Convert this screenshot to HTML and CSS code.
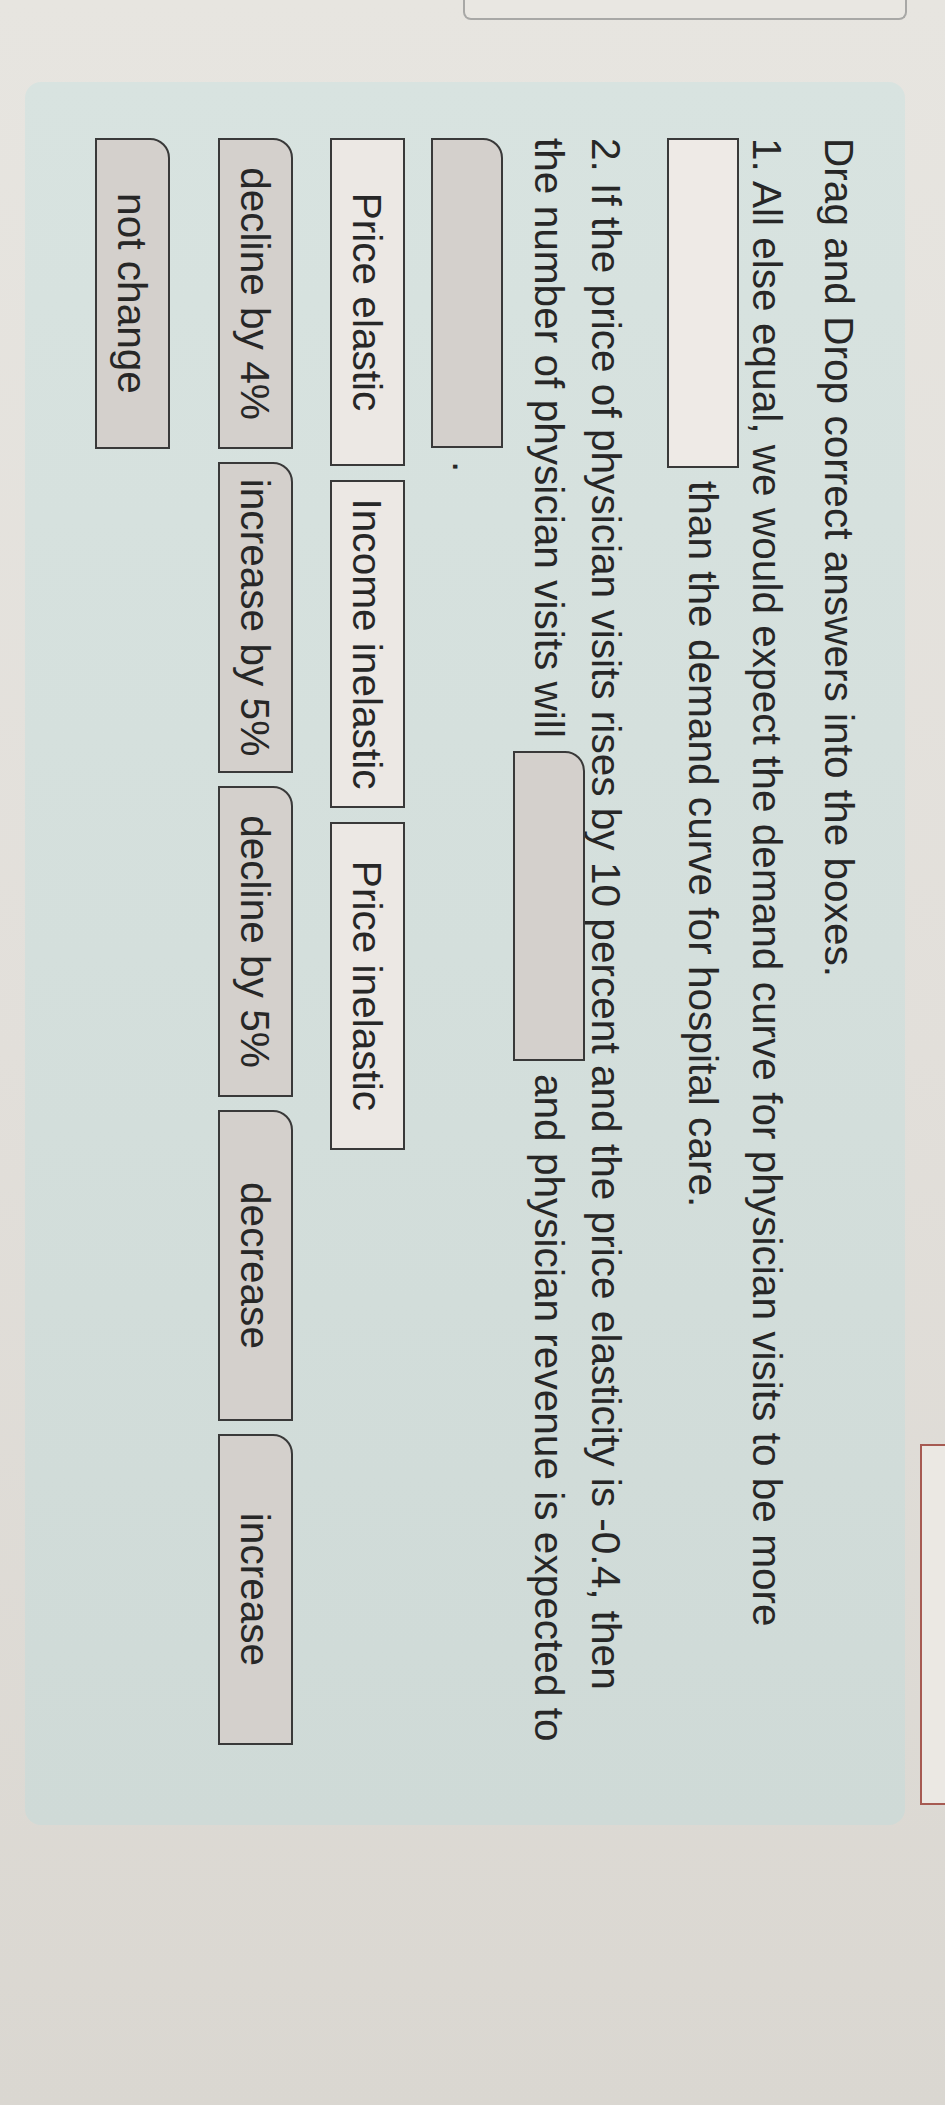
FILE: index.html
```html
<!DOCTYPE html>
<html lang="en">
<head>
<meta charset="utf-8">
<title>Drag and Drop</title>
<link rel="stylesheet" href="styles.css">
</head>
<body>
<div class="screen">
  <div class="page">
    <div class="top-strip"><div class="feedback-box"></div></div>
    <div class="main">
      <div class="side-box"></div>
      <section class="panel">
        <p class="line title">Drag and Drop correct answers into the boxes.</p>
        <p class="line q1a">1. All else equal, we would expect the demand curve for physician visits to be more</p>
        <div class="row q1b">
          <span class="drop drop-white"></span>
          <span>than the demand curve for hospital care.</span>
        </div>
        <p class="line q2a">2. If the price of physician visits rises by 10 percent and the price elasticity is -0.4, then</p>
        <div class="row q2b">
          <span>the number of physician visits will</span>
          <span class="drop drop-grey"></span>
          <span>and physician revenue is expected to</span>
        </div>
        <div class="row q2c">
          <span class="drop drop-grey"></span>
          <span>.</span>
        </div>
        <div class="chips chips-white">
          <div class="chip chip-white">Price elastic</div>
          <div class="chip chip-white">Income inelastic</div>
          <div class="chip chip-white">Price inelastic</div>
        </div>
        <div class="chips chips-grey">
          <div class="chip chip-grey">decline by 4%</div>
          <div class="chip chip-grey">increase by 5%</div>
          <div class="chip chip-grey">decline by 5%</div>
          <div class="chip chip-grey">decrease</div>
          <div class="chip chip-grey">increase</div>
          <div class="chip chip-grey">not change</div>
        </div>
      </section>
    </div>
  </div>
</div>
</body>
</html>
```

FILE: styles.css
```css
html, body {
  margin: 0;
  padding: 0;
  background: #e1dfd9;
}

.screen {
  width: 945px;
  height: 2105px;
  overflow: hidden;
  position: relative;
}

/* The photographed screen is turned 90deg clockwise */
.page {
  width: 2105px;
  height: 945px;
  transform-origin: 0 0;
  transform: translateX(945px) rotate(90deg);
  background: linear-gradient(to right, #e7e5e0, #e2dfda 50%, #dad7d1);
  font-family: "Liberation Sans", Arial, sans-serif;
  font-size: 40.6px;
  color: #272727;
  overflow: hidden;
}

.top-strip {
  height: 40px;
  padding-left: 1444px;
  box-sizing: border-box;
}

.feedback-box {
  width: 361px;
  height: 25px;
  box-sizing: border-box;
  border: 2px solid #a65a52;
  border-top: none;
  background: #ebe8e3;
}

.main {
  display: flex;
  align-items: flex-start;
  gap: 62px;
}

.side-box {
  width: 20px;
  height: 444px;
  margin-top: -2px;
  box-sizing: border-box;
  border: 2px solid #a8a8a6;
  border-left: none;
  border-radius: 0 8px 8px 0;
  background: #e9e7e2;
  flex: none;
}

.panel {
  width: 1743px;
  flex: none;
  box-sizing: border-box;
  padding: 38px 0 70px 56px;
  background: linear-gradient(to right, #d8e3e0, #d4dfdc 50%, #cfdad7);
  border-radius: 16px;
}

.line {
  margin: 0;
  line-height: 56px;
  white-space: nowrap;
}

.q1a { margin-top: 16px; }
.q2a { margin-top: 33px; }

.row {
  display: flex;
  align-items: center;
  gap: 13px;
  line-height: 56px;
  white-space: nowrap;
}

.q2b { margin-top: -7px; }
.q2c { margin-top: 10px; }

.drop {
  display: block;
  flex: none;
  height: 72px;
  box-sizing: border-box;
  border: 2px solid #393939;
}

.drop-white {
  width: 330px;
  background: #eeeae6;
}

.drop-grey {
  width: 310px;
  background: #d4d0cc;
  border-top-left-radius: 20px;
}

.chips {
  display: flex;
  flex-wrap: wrap;
}

.chips-white {
  margin-top: 26px;
  gap: 14px;
}

.chips-grey {
  margin-top: 37px;
  gap: 48px 13px;
}

.chip {
  height: 75px;
  box-sizing: border-box;
  border: 2px solid #393939;
  display: flex;
  align-items: center;
  justify-content: center;
  white-space: nowrap;
  line-height: 56px;
  flex: none;
}

.chip-white {
  width: 328px;
  background: #ece8e4;
}

.chip-grey {
  width: 311px;
  background: #d4d0cc;
  border-top-left-radius: 20px;
}
```
